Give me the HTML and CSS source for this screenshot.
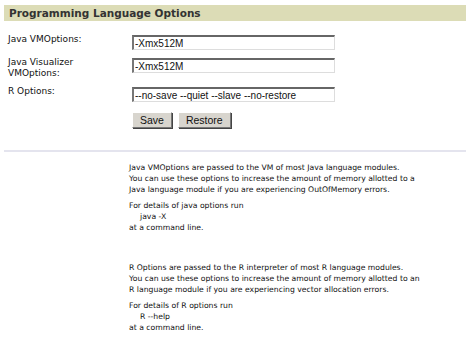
FILE: index.html
```html
<!DOCTYPE html>
<html lang="en">
<head>
  <meta charset="UTF-8" />
  <title>Programming Language Options</title>
  <link rel="stylesheet" href="styles.css">
</head>
<body>
  <h2 class="title">Programming Language Options</h2>

  <form class="options">
    <label for="javaOpts">Java VMOptions:</label>
    <input id="javaOpts" type="text" value="-Xmx512M">

    <label for="vizOpts">Java Visualizer VMOptions:</label>
    <input id="vizOpts" type="text" value="-Xmx512M">

    <label for="rOpts">R Options:</label>
    <input id="rOpts" type="text" value="--no-save --quiet --slave --no-restore">

    <span></span>
    <div class="buttons">
      <button type="button">Save</button>
      <button type="button">Restore</button>
    </div>
  </form>

  <hr class="divider">

  <div class="help">
    <p>Java VMOptions are passed to the VM of most Java language modules.<br>
    You can use these options to increase the amount of memory allotted to a<br>
    Java language module if you are experiencing OutOfMemory errors.</p>
    <p>For details of java options run<br>
    <span class="cmd">java -X</span><br>
    at a command line.</p>

    <p class="gap">R Options are passed to the R interpreter of most R language modules.<br>
    You can use these options to increase the amount of memory allotted to an<br>
    R language module if you are experiencing vector allocation errors.</p>
    <p>For details of R options run<br>
    <span class="cmd">R --help</span><br>
    at a command line.</p>
  </div>
</body>
</html>
```

FILE: styles.css
```css
* {
  box-sizing: border-box;
}

body {
  margin: 0;
  background: #fff;
  color: #111;
  font-family: 'DejaVu Sans', Verdana, sans-serif;
}

.title {
  margin: 5px 0 0 4px;
  width: 462px;
  height: 16px;
  padding-left: 5px;
  background: #dcdcb6;
  color: #333;
  font-size: 10.5px;
  line-height: 16px;
  font-weight: bold;
}

.options {
  display: grid;
  grid-template-columns: 124px 203px;
  grid-template-rows: 16px 22px 15px auto;
  row-gap: 7px;
  margin: 14px 0 0 8px;
}

.options label {
  font-size: 9px;
  line-height: 11px;
  padding-right: 20px;
  margin-top: -1px;
}

.options input {
  height: 15px;
  padding: 0 1px;
  border: 1px solid #ddd;
  border-top: 2px solid #666;
  border-left: 2px solid #777;
  font-family: 'Liberation Sans', Arial, sans-serif;
  font-size: 10px;
  color: #111;
}

.buttons {
  display: flex;
  gap: 6px;
  margin-top: 3px;
}

.buttons button {
  height: 16px;
  padding: 0 7px;
  background: #d8d5ce;
  border: 1px solid;
  border-color: #fff #777 #777 #fff;
  box-shadow: 1px 1px 0 #444;
  font-family: 'Liberation Sans', Arial, sans-serif;
  font-size: 10.5px;
  color: #111;
}

.divider {
  margin: 22px 8px 0 4px;
  width: 462px;
  height: 2px;
  border: none;
  background: #e4e4ee;
}

.help {
  padding-left: 129px;
  margin-top: 10px;
  font-size: 7.7px;
  line-height: 11px;
}

.help p {
  margin: 0 0 5px;
}

.help .gap {
  margin-top: 29px;
}

.cmd {
  padding-left: 11px;
}
```
